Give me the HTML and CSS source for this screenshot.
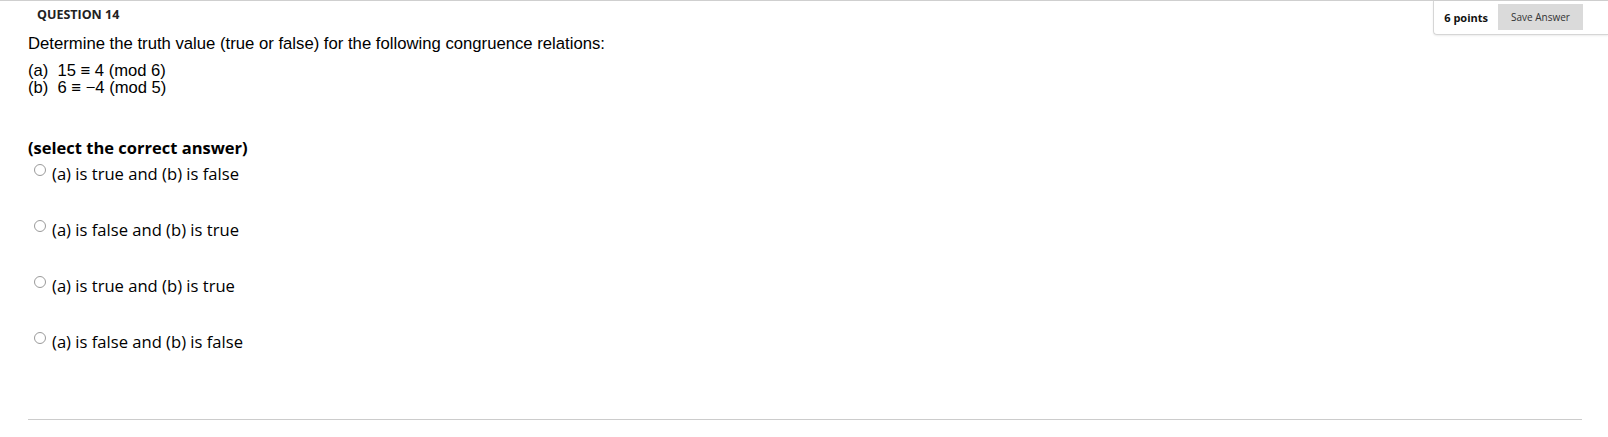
FILE: index.html
```html
<!DOCTYPE html>
<html>
<head>
<meta charset="utf-8">
<link rel="stylesheet" href="styles.css">
</head>
<body>
<div class="question">
  <div class="q-header">
    <h3 class="q-title">QUESTION 14</h3>
    <div class="points-box">
      <span class="points">6 points</span>
      <button class="save-btn">Save Answer</button>
    </div>
  </div>
  <div class="q-body">
    <p class="prompt">Determine the truth value (true or false) for the following congruence relations:</p>
    <p class="relations">(a)&nbsp; 15 ≡ 4 (mod 6)<br>(b)&nbsp; 6 ≡ −4 (mod 5)</p>
    <p class="instr">(select the correct answer)</p>
    <ul class="options">
      <li class="option"><span class="radio"></span><span class="opt-text">(a) is true and (b) is false</span></li>
      <li class="option"><span class="radio"></span><span class="opt-text">(a) is false and (b) is true</span></li>
      <li class="option"><span class="radio"></span><span class="opt-text">(a) is true and (b) is true</span></li>
      <li class="option"><span class="radio"></span><span class="opt-text">(a) is false and (b) is false</span></li>
    </ul>
    <hr class="divider">
  </div>
</div>
</body>
</html>
```
FILE: styles.css
```css
html, body {
  margin: 0;
  padding: 0;
  background: #fff;
}
body {
  font-family: "Open Sans", "Liberation Sans", sans-serif;
  color: #000;
}
.question {
  border-top: 1px solid #cfcfcf;
}
.q-header {
  display: flex;
  justify-content: space-between;
  align-items: flex-start;
}
.q-title {
  margin: 0;
  padding: 5px 0 0 37px;
  font-size: 12.5px;
  font-weight: 700;
  color: #222;
}
.points-box {
  display: flex;
  align-items: center;
  gap: 10px;
  padding: 3px 25px 4px 10px;
  border-left: 1px solid #d6d6d6;
  border-bottom: 1px solid #d6d6d6;
  border-bottom-left-radius: 4px;
  box-shadow: 0 1px 2px rgba(0,0,0,0.08);
}
.points {
  font-size: 11px;
  font-weight: 700;
  color: #111;
}
.save-btn {
  font-family: "Open Sans", "Liberation Sans", sans-serif;
  font-size: 10px;
  color: #333;
  background: #dadada;
  border: none;
  padding: 0 12px;
  height: 26px;
  width: 85px;
}
.q-body {
  padding: 0 26px 0 28px;
}
.prompt {
  margin: -1px 0 0 0;
  font-family: "Liberation Sans", Arial, sans-serif;
  font-size: 16.7px;
  line-height: 20px;
}
.relations {
  margin: 9px 0 0 0;
  font-family: "Liberation Sans", Arial, sans-serif;
  font-size: 16.6px;
  line-height: 16.5px;
}
.instr {
  margin: 42px 0 0 0;
  font-size: 16.5px;
  font-weight: 700;
  line-height: 20px;
}
.options {
  list-style: none;
  margin: 0;
  padding: 0;
}
.option {
  display: flex;
  gap: 6px;
  height: 56px;
  align-items: flex-start;
  padding-top: 6px;
  box-sizing: border-box;
  font-size: 16.6px;
  line-height: 20px;
}
.radio {
  width: 12px;
  height: 12px;
  border: 1px solid #9a9a9a;
  border-radius: 50%;
  margin: 0 0 0 6px;
  flex: none;
  box-sizing: border-box;
}
.divider {
  border: none;
  border-top: 1px solid #cccccc;
  margin: 37px 0 0 0;
}
```
